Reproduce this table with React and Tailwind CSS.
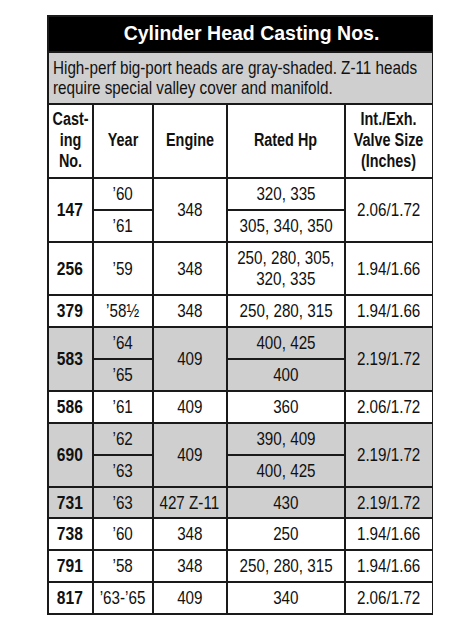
import React from "react";

const FONT = { fontFamily: '"Liberation Sans", Arial, sans-serif' };

function Cell({ children, gray, bold, head, span }) {
  const size = head ? "text-[18px] font-bold" : bold ? "text-[19px] font-bold" : "text-[19px]";
  const scale = head ? "scale-x-[0.8]" : bold ? "scale-x-[0.82]" : "scale-x-[0.8]";
  return (
    <div
      className={`flex items-center justify-center text-center leading-[21px] text-[#111] ${size} ${gray ? "bg-[#cfcfcf]" : "bg-white"} ${span ? "row-span-2" : ""}`}
    >
      <span className={`inline-block whitespace-nowrap ${scale}`}>{children}</span>
    </div>
  );
}

export default function App() {
  return (
    <div className="w-[474px] h-[632px] bg-white" style={FONT}>
      <div className="ml-[47px] pt-[15px]">
        <div className="w-[386px] bg-[#1a1a1a] p-[1.5px] flex flex-col gap-[1.5px]">
          <div className="h-[34.5px] bg-black flex items-center justify-center pl-[23px] text-white font-bold text-[19.5px]">
            Cylinder Head Casting Nos.
          </div>
          <div className="h-[50.5px] bg-[#cfcfcf] flex flex-col justify-center pl-[4px] text-[18.5px] leading-[20px] text-[#111]">
            <span className="inline-block whitespace-nowrap origin-left scale-x-[0.824]">
              High-perf big-port heads are gray-shaded. Z-11 heads
              <br />
              require special valley cover and manifold.
            </span>
          </div>
          <div className="grid gap-[1.5px] grid-cols-[43.5px_58.5px_72.5px_116.5px_86px] grid-rows-[72.5px_30.5px_30.5px_51.5px_30.5px_30.5px_30.5px_30.5px_30.5px_30.5px_29.5px_30.5px_30.5px_30.5px]">
            <Cell head>Cast-<br />ing<br />No.</Cell>
            <Cell head>Year</Cell>
            <Cell head>Engine</Cell>
            <Cell head>Rated Hp</Cell>
            <Cell head>Int./Exh.<br />Valve Size<br />(Inches)</Cell>

            <Cell bold span>147</Cell>
            <Cell>’60</Cell>
            <Cell span>348</Cell>
            <Cell>320, 335</Cell>
            <Cell span>2.06/1.72</Cell>
            <Cell>’61</Cell>
            <Cell>305, 340, 350</Cell>

            <Cell bold>256</Cell>
            <Cell>’59</Cell>
            <Cell>348</Cell>
            <Cell>250, 280, 305,<br />320, 335</Cell>
            <Cell>1.94/1.66</Cell>

            <Cell bold>379</Cell>
            <Cell>’58½</Cell>
            <Cell>348</Cell>
            <Cell>250, 280, 315</Cell>
            <Cell>1.94/1.66</Cell>

            <Cell gray bold span>583</Cell>
            <Cell gray>’64</Cell>
            <Cell gray span>409</Cell>
            <Cell gray>400, 425</Cell>
            <Cell gray span>2.19/1.72</Cell>
            <Cell gray>’65</Cell>
            <Cell gray>400</Cell>

            <Cell bold>586</Cell>
            <Cell>’61</Cell>
            <Cell>409</Cell>
            <Cell>360</Cell>
            <Cell>2.06/1.72</Cell>

            <Cell gray bold span>690</Cell>
            <Cell gray>’62</Cell>
            <Cell gray span>409</Cell>
            <Cell gray>390, 409</Cell>
            <Cell gray span>2.19/1.72</Cell>
            <Cell gray>’63</Cell>
            <Cell gray>400, 425</Cell>

            <Cell gray bold>731</Cell>
            <Cell gray>’63</Cell>
            <Cell gray>427 Z-11</Cell>
            <Cell gray>430</Cell>
            <Cell gray>2.19/1.72</Cell>

            <Cell bold>738</Cell>
            <Cell>’60</Cell>
            <Cell>348</Cell>
            <Cell>250</Cell>
            <Cell>1.94/1.66</Cell>

            <Cell bold>791</Cell>
            <Cell>’58</Cell>
            <Cell>348</Cell>
            <Cell>250, 280, 315</Cell>
            <Cell>1.94/1.66</Cell>

            <Cell bold>817</Cell>
            <Cell>’63-’65</Cell>
            <Cell>409</Cell>
            <Cell>340</Cell>
            <Cell>2.06/1.72</Cell>
          </div>
        </div>
      </div>
    </div>
  );
}
